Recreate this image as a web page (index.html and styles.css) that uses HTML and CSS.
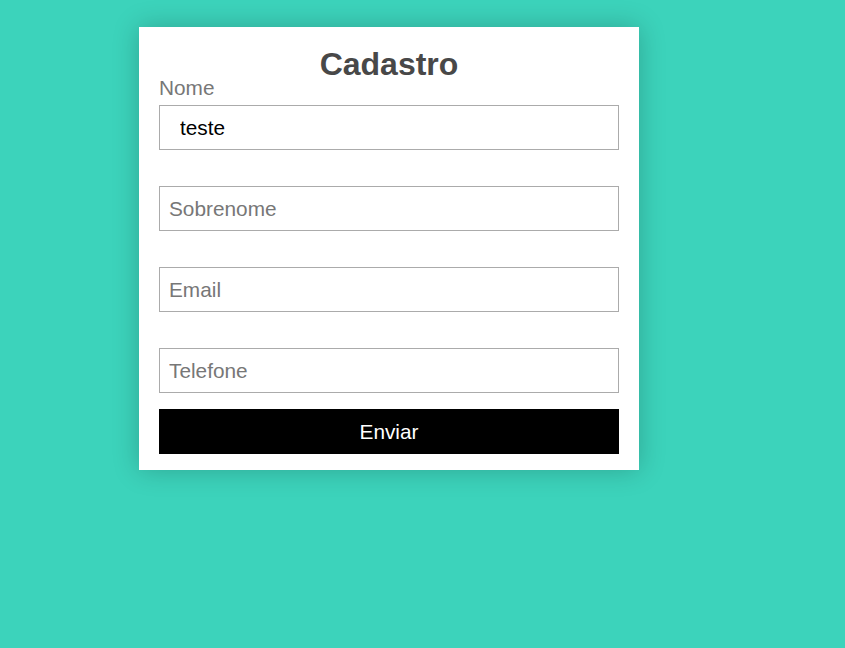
FILE: index.html
```html
<!DOCTYPE html>
<html lang="pt">
<head>
<meta charset="utf-8">
<title>Cadastro</title>
<link rel="stylesheet" href="styles.css">
</head>
<body>
<form class="card">
  <h2 class="title">Cadastro</h2>
  <label class="label" for="nome">Nome</label>
  <input class="field field-filled" id="nome" type="text" value="teste">
  <input class="field" type="text" placeholder="Sobrenome">
  <input class="field" type="email" placeholder="Email">
  <input class="field field-last" type="tel" placeholder="Telefone">
  <button class="submit" type="button">Enviar</button>
</form>
</body>
</html>
```
FILE: styles.css
```css
html, body {
  margin: 0;
  padding: 0;
}
body {
  background: #3cd3bb;
  min-height: 648px;
  font-family: "Liberation Sans", Arial, sans-serif;
}
.card {
  box-sizing: border-box;
  width: 500px;
  margin: 27px 0 0 139px;
  padding: 21px 20px 16px;
  background: #ffffff;
  box-shadow: 0 0 25px rgba(0, 0, 0, 0.22);
  display: flex;
  flex-direction: column;
}
.title {
  margin: 0 0 -4px;
  font-size: 32px;
  line-height: 32px;
  font-weight: bold;
  color: #484848;
  text-align: center;
}
.label {
  display: block;
  font-size: 20.8px;
  line-height: 24px;
  color: #777777;
  margin-bottom: 5px;
}
.field {
  box-sizing: border-box;
  width: 100%;
  height: 45px;
  margin: 0 0 36px;
  padding: 0 9px;
  border: 1px solid #ababab;
  border-radius: 0;
  font-family: "Liberation Sans", Arial, sans-serif;
  font-size: 20.8px;
  color: #000000;
  background: #ffffff;
  outline: none;
}
.field::placeholder {
  color: #777777;
  opacity: 1;
}
.field-filled {
  padding-left: 20px;
}
.field-last {
  margin-bottom: 16px;
}
.submit {
  box-sizing: border-box;
  width: 100%;
  height: 45px;
  margin: 0;
  border: none;
  border-radius: 0;
  background: #000000;
  color: #ffffff;
  font-family: "Liberation Sans", Arial, sans-serif;
  font-size: 20.8px;
  cursor: pointer;
}
```
